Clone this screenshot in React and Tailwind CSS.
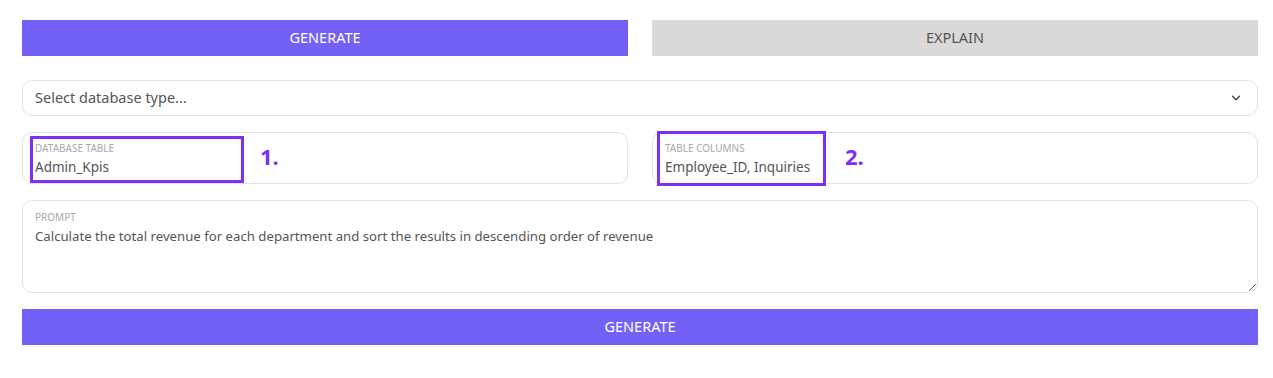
import { ChevronDown } from 'lucide-react'

const font = { fontFamily: '"Noto Sans", "Open Sans", sans-serif' }

function Field({ label, value, mark, num, n }) {
  return (
    <div className="relative flex-1 h-[52px] border border-[#e3e3e3] rounded-[10px] bg-white">
      <div className="absolute left-[12px] top-[10px] text-[10px] leading-none uppercase text-[#a9a9a9]">{label}</div>
      <div className="absolute left-[12px] top-[28px] text-[13.5px] leading-none text-[#555]">{value}</div>
      <div className={`absolute border-[3px] border-[#7b2ff7] ${mark}`} />
      <div className={`absolute text-[22px] font-bold text-[#7b2ff7] leading-none ${num}`}>{n}</div>
    </div>
  )
}

export default function App() {
  return (
    <div className="bg-white w-[1273px] h-[378px] pl-[22px] pr-[15px] pt-[20px]" style={font}>
      <div className="flex gap-[24px]">
        <button className="flex-1 h-[36px] bg-[#7360f6] text-white text-[14.5px]">GENERATE</button>
        <button className="flex-1 h-[36px] bg-[#d9d9d9] text-[#555] text-[14.5px]">EXPLAIN</button>
      </div>

      <div className="mt-[24px] h-[36px] border border-[#e3e3e3] rounded-[10px] flex items-center justify-between pl-[12px] pr-[14px]">
        <span className="text-[14.5px] text-[#555]">Select database type...</span>
        <ChevronDown size={14} strokeWidth={2.5} className="text-[#444]" />
      </div>

      <div className="mt-[16px] flex gap-[24px]">
        <Field n="1." label="Database Table" value="Admin_Kpis" mark="left-[7px] top-[3px] w-[214px] h-[47px]" num="left-[237px] top-[12px]" />
        <Field n="2." label="Table Columns" value="Employee_ID, Inquiries" mark="left-[4px] top-[-2px] w-[169px] h-[55px]" num="left-[192px] top-[12px]" />
      </div>

      <div className="relative mt-[16px] h-[93px] border border-[#e3e3e3] rounded-[10px] overflow-hidden">
        <div className="absolute left-[12px] top-[11px] text-[10px] leading-none text-[#a9a9a9]">PROMPT</div>
        <textarea
          className="absolute inset-0 resize pt-[26px] pl-[12px] pr-[12px] text-[13.2px] text-[#555] outline-none bg-transparent"
          style={font}
          defaultValue="Calculate the total revenue for each department and sort the results in descending order of revenue"
        />
      </div>

      <button className="mt-[16px] w-full h-[36px] bg-[#7360f6] text-white text-[14.5px]">GENERATE</button>
    </div>
  )
}
